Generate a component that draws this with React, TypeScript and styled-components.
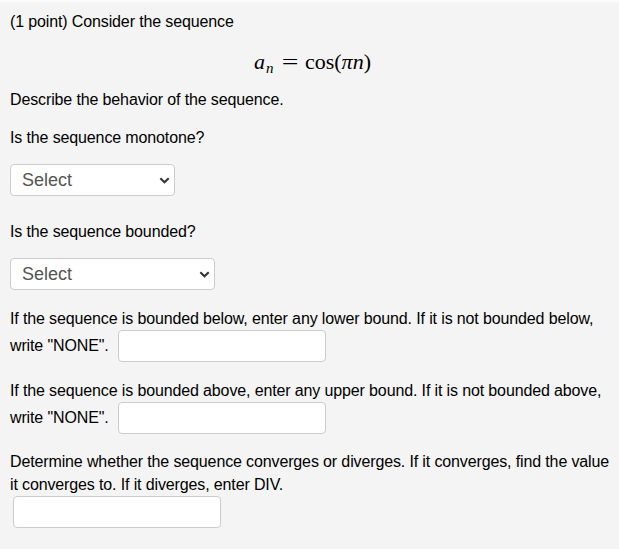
import styled, { createGlobalStyle } from "styled-components";

const GlobalStyle = createGlobalStyle`
  html, body {
    margin: 0;
    padding: 0;
    background: #f4f4f4;
  }
  body {
    font-family: "Liberation Sans", Arial, sans-serif;
    font-size: 16px;
    color: #000;
  }
`;

const Page = styled.div`
  border-top: 2px solid #fbfbfb;
  padding: 8px 4px 20px 10px;
  line-height: 23px;
  letter-spacing: -0.13px;
`;

const Text = styled.p<{ $top?: number }>`
  margin: ${(p) => p.$top ?? 0}px 0 0 0;
`;

const MathLine = styled.div`
  margin: 17px 0 0 0;
  text-align: center;
  font-family: "Liberation Serif", "DejaVu Serif", serif;
  font-size: 22px;
  line-height: 24px;
  letter-spacing: 0;
  padding-left: 0;
  .v {
    font-style: italic;
  }
  sub {
    font-size: 15px;
    font-style: italic;
    vertical-align: -4px;
    line-height: 0;
    margin-left: 1px;
  }
  .eq {
    display: inline-block;
    transform: scaleX(1.35);
    margin: 0 9px 0 10px;
  }
  .pi {
    font-style: italic;
  }
`;

const SelectWrap = styled.div<{ $width: number; $top: number }>`
  position: relative;
  width: ${(p) => p.$width}px;
  height: 32px;
  margin-top: ${(p) => p.$top}px;
  svg {
    position: absolute;
    right: 5px;
    top: 13px;
    pointer-events: none;
  }
`;

const Select = styled.select`
  appearance: none;
  width: 100%;
  height: 32px;
  box-sizing: border-box;
  border: 1px solid #cccccc;
  border-radius: 4px;
  background: #fff;
  color: #555;
  font-family: "Liberation Sans", Arial, sans-serif;
  font-size: 18px;
  letter-spacing: 0;
  padding: 0 10px 0 11px;
  outline: none;
`;

const Blank = styled.input<{ $left?: number }>`
  box-sizing: border-box;
  width: 208px;
  height: 32px;
  border: 1px solid #cccccc;
  border-radius: 4px;
  background: #fff;
  vertical-align: baseline;
  margin: 0 0 0 ${(p) => p.$left ?? 5}px;
  font-family: "Liberation Sans", Arial, sans-serif;
  font-size: 16px;
  outline: none;
`;

const Chevron = () => (
  <svg width="11" height="7" viewBox="0 0 11 7">
    <path d="M1.3 1.3 L5.5 5.3 L9.7 1.3" fill="none" stroke="#333" strokeWidth="2" />
  </svg>
);

const Choice = ({ width, top }: { width: number; top: number }) => (
  <SelectWrap $width={width} $top={top}>
    <Select defaultValue="">
      <option value="">Select</option>
      <option value="yes">Yes</option>
      <option value="no">No</option>
    </Select>
    <Chevron />
  </SelectWrap>
);

export default function App() {
  return (
    <>
      <GlobalStyle />
      <Page>
        <Text>(1 point) Consider the sequence</Text>
        <MathLine>
          <span className="v">a</span>
          <sub>n</sub>
          <span className="eq">=</span>
          cos(<span className="pi">πn</span>)
        </MathLine>
        <Text $top={14}>Describe the behavior of the sequence.</Text>
        <Text $top={15}>Is the sequence monotone?</Text>
        <Choice width={165} top={15} />
        <Text $top={24}>Is the sequence bounded?</Text>
        <Choice width={205} top={15} />
        <Text $top={17}>
          If the sequence is bounded below, enter any lower bound. If it is not bounded below,
          write "NONE". <Blank />
        </Text>
        <Text $top={17}>
          If the sequence is bounded above, enter any upper bound. If it is not bounded above,
          write "NONE". <Blank />
        </Text>
        <Text $top={16}>
          Determine whether the sequence converges or diverges. If it converges, find the value
          it converges to. If it diverges, enter DIV.
          <br />
          <Blank $left={3} />
        </Text>
      </Page>
    </>
  );
}
